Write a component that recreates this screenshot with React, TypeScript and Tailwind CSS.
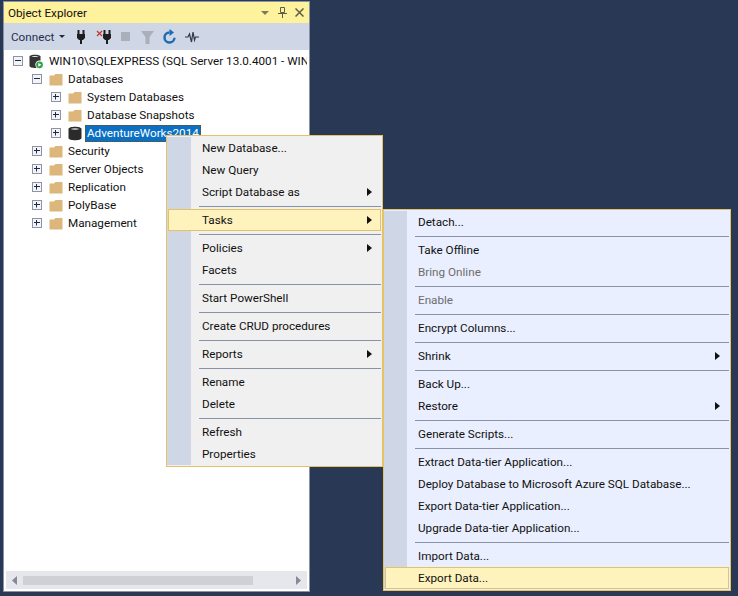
import type { ReactNode } from "react";

const font = "font-['Roboto','Noto_Sans',sans-serif]";

function Box({ open }: { open?: boolean }) {
  return (
    <svg width="10" height="10" viewBox="0 0 10 10" className="shrink-0">
      <rect x="0.500" y="0.500" width="9" height="9" fill="#f3f4f7" stroke="#8e94a6" />
      <path d="M2 4.500h6" stroke="#1e2a44" fill="none" />
      {!open && <path d="M4.500 2v5.500" stroke="#1e2a44" fill="none" />}
    </svg>
  );
}

function Folder() {
  return (
    <svg width="15" height="13" viewBox="0 0 15 13" className="shrink-0">
      <path d="M0.500 2.500V12.500H13.500V1H6.500L5 2.500Z" fill="#dcb67a" />
    </svg>
  );
}

function Cylinder() {
  return (
    <svg width="14" height="15" viewBox="0 0 14 15" className="shrink-0">
      <path d="M0.500 3C0.500 0 13.500 0 13.500 3V12C13.500 15 0.500 15 0.500 12Z" fill="#2b2b2b" />
      <path d="M2.500 3C4.500 2 9.500 2 11.500 3C9.500 4 4.500 4 2.500 3Z" fill="#d4d4d4" />
    </svg>
  );
}

function ServerIcon() {
  return (
    <svg width="15" height="15" viewBox="0 0 15 15" className="shrink-0">
      <path d="M0.500 2.500C0.500 0 11.500 0 11.500 2.500V12C11.500 14.500 0.500 14.500 0.500 12Z" fill="#333" />
      <path d="M2.500 2.500C4 1.700 8 1.700 9.500 2.500C8 3.300 4 3.300 2.500 2.500Z" fill="#ddd" />
      <circle cx="10.500" cy="10.800" r="4.200" fill="#fff" />
      <circle cx="10.500" cy="10.800" r="3.400" fill="#2f9e44" />
      <path d="M9.300 8.900v3.800l3.200-1.900Z" fill="#fff" />
    </svg>
  );
}

function Row({ indent, icon, open, children }: { indent: string; icon: ReactNode; open?: boolean; children: ReactNode }) {
  return (
    <div className={`flex h-[18px] items-center ${indent}`}>
      <Box open={open} />
      <span className="ml-[6px] flex w-[16px] justify-center">{icon}</span>
      <span className="ml-[4px] whitespace-nowrap pt-[2px]">{children}</span>
    </div>
  );
}

function Plug() {
  return (
    <svg width="8" height="14" viewBox="0 0 8 14" className="shrink-0">
      <path d="M1.500 0v4M6.500 0v4" stroke="#1e1e1e" strokeWidth="2" />
      <path d="M0 4h8v4L6 10H5v4H3v-4H2L0 8Z" fill="#1e1e1e" />
    </svg>
  );
}

function Toolbar() {
  return (
    <div className="flex h-[27px] items-center bg-[#cfd6e5] pl-[7px] text-[#1e3050]">
      <span className="mt-[2px] w-[48px]">Connect</span>
      <svg width="6" height="3" viewBox="0 0 6 3" className="shrink-0">
        <path d="M0 0h6L3 3Z" fill="#1e2a44" />
      </svg>
      <span className="ml-[12px] flex items-center">
        <Plug />
      </span>
      <svg width="7" height="7" viewBox="0 0 7 7" className="mb-[7px] ml-[11px] shrink-0">
        <path d="M1 1l5 5M6 1l-5 5" stroke="#c4382c" strokeWidth="1.200" />
      </svg>
      <Plug />
      <svg width="9" height="9" viewBox="0 0 9 9" className="ml-[10px] shrink-0">
        <rect width="9" height="9" fill="#a9afbb" />
      </svg>
      <svg width="13" height="14" viewBox="0 0 13 14" className="ml-[11px] shrink-0">
        <path d="M0 1h13L8.500 7v7h-4V7Z" fill="#a9afbb" />
      </svg>
      <svg width="13" height="15" viewBox="0 0 13 15" className="ml-[9px] shrink-0">
        <path d="M6.500 3.500A5 5 0 1 0 11.500 8.800" fill="none" stroke="#1c6bb0" strokeWidth="2.400" />
        <path d="M6.500 0l4.500 3.500L6.500 7Z" fill="#1c6bb0" />
      </svg>
      <svg width="14" height="12" viewBox="0 0 14 12" className="ml-[9px] shrink-0">
        <path d="M0 6h3l1.500-3 2 8L8 1l1.500 8L10.500 6H14" fill="none" stroke="#33384a" strokeWidth="1.200" />
      </svg>
    </div>
  );
}

function Tree() {
  return (
    <div className="min-h-0 flex-1 overflow-hidden bg-white pt-[2px] text-[#111]">
      <div className="w-[301px] overflow-hidden whitespace-nowrap">
        <Row indent="pl-[7px]" open icon={<ServerIcon />}>
          <span className="ml-[1px]">WIN10\SQLEXPRESS (SQL Server 13.0.4001 - WIN10\User)</span>
        </Row>
        <Row indent="pl-[26px]" open icon={<Folder />}>Databases</Row>
        <Row indent="pl-[45px]" icon={<Folder />}>System Databases</Row>
        <Row indent="pl-[45px]" icon={<Folder />}>Database Snapshots</Row>
        <div className="flex h-[18px] items-center pl-[45px]">
          <Box />
          <span className="ml-[6px] flex w-[16px] justify-center"><Cylinder /></span>
          <span className="ml-[2px] flex h-[17px] items-center border border-dotted border-[#7a4b00] bg-[#0b6fc4] px-[1px] pt-[2px] text-white">
            AdventureWorks2014
          </span>
        </div>
        <Row indent="pl-[26px]" icon={<Folder />}>Security</Row>
        <Row indent="pl-[26px]" icon={<Folder />}>Server Objects</Row>
        <Row indent="pl-[26px]" icon={<Folder />}>Replication</Row>
        <Row indent="pl-[26px]" icon={<Folder />}>PolyBase</Row>
        <Row indent="pl-[26px]" icon={<Folder />}>Management</Row>
      </div>
    </div>
  );
}

type Entry = { t?: string; sub?: boolean; off?: boolean; hot?: boolean };

function Menu({ items, textPad, sepPad, className, innerClass }: { items: Entry[]; textPad: string; sepPad: string; className: string; innerClass: string }) {
  return (
    <div className={`absolute border border-[#e5c365] py-[1px] ${className}`}>
      <div className={innerClass}>
        {items.map((it, i) =>
          it.t ? (
            <div
              key={i}
              className={`mx-[1px] flex h-[22px] items-center border ${it.hot ? "border-[#e5c365] bg-[#fef2bd]" : "border-transparent"} ${it.off ? "text-[#6d6d6d]" : "text-[#111]"}`}
            >
              <span className={`flex-1 whitespace-nowrap pt-[2px] ${textPad}`}>{it.t}</span>
              {it.sub && (
                <svg width="5" height="8" viewBox="0 0 5 8" className="mr-[8px]">
                  <path d="M0 0l5 4-5 4Z" fill="#111" />
                </svg>
              )}
            </div>
          ) : (
            <div key={i} className={`flex h-[6px] items-center pr-[1px] ${sepPad}`}>
              <div className="h-[1px] flex-1 bg-[#8a93a5]" />
            </div>
          ),
        )}
      </div>
    </div>
  );
}

const dbMenu: Entry[] = [
  { t: "New Database..." },
  { t: "New Query" },
  { t: "Script Database as", sub: true },
  {},
  { t: "Tasks", sub: true, hot: true },
  {},
  { t: "Policies", sub: true },
  { t: "Facets" },
  {},
  { t: "Start PowerShell" },
  {},
  { t: "Create CRUD procedures" },
  {},
  { t: "Reports", sub: true },
  {},
  { t: "Rename" },
  { t: "Delete" },
  {},
  { t: "Refresh" },
  { t: "Properties" },
];

const taskMenu: Entry[] = [
  { t: "Detach..." },
  {},
  { t: "Take Offline" },
  { t: "Bring Online", off: true },
  {},
  { t: "Enable", off: true },
  {},
  { t: "Encrypt Columns..." },
  {},
  { t: "Shrink", sub: true },
  {},
  { t: "Back Up..." },
  { t: "Restore", sub: true },
  {},
  { t: "Generate Scripts..." },
  {},
  { t: "Extract Data-tier Application..." },
  { t: "Deploy Database to Microsoft Azure SQL Database..." },
  { t: "Export Data-tier Application..." },
  { t: "Upgrade Data-tier Application..." },
  {},
  { t: "Import Data..." },
  { t: "Export Data...", hot: true },
];

export default function App() {
  return (
    <div className={`relative h-[596px] w-[738px] overflow-hidden bg-[#293955] pb-[4px] pl-[3px] pt-[1px] text-[11.7px] ${font}`}>
      {/* Object Explorer panel */}
      <div className="flex h-full w-[307px] flex-col border border-[#8a93a5]">
        <div className="flex h-[21px] items-center bg-[#fff29d] pl-[4px] pr-[5px] text-[#111]">
          <span className="mt-[3px] flex-1">Object Explorer</span>
          <svg width="8" height="4" viewBox="0 0 8 4">
            <path d="M0 0h8L4 4Z" fill="#7d7a55" />
          </svg>
          <svg width="9" height="11" viewBox="0 0 9 11" className="ml-[9px]">
            <path d="M2.500 0.500h4v5h-4ZM0 6.500h9M4.500 7v4" fill="none" stroke="#5f5d45" />
          </svg>
          <svg width="9" height="9" viewBox="0 0 9 9" className="ml-[8px]">
            <path d="M0.500 0.500l8 8M8.500 0.500l-8 8" stroke="#5f5d45" strokeWidth="1.500" />
          </svg>
        </div>
        <Toolbar />
        <div className="flex min-h-0 flex-1 flex-col border-x-2 border-b-2 border-white">
          <Tree />
          <div className="flex h-[18px] items-center bg-[#e6e7ec] px-[6px]">
            <svg width="5" height="9" viewBox="0 0 5 9"><path d="M5 0v9L0 4.500Z" fill="#868999" /></svg>
            <div className="ml-[6px] h-[9px] w-[230px] bg-[#ced0d6]" />
            <div className="flex-1" />
            <svg width="5" height="9" viewBox="0 0 5 9"><path d="M0 0v9l5-4.500Z" fill="#868999" /></svg>
          </div>
        </div>
      </div>

      {/* Context menus */}
      <Menu
        items={dbMenu}
        textPad="pl-[33px]"
        sepPad="pl-[32px]"
        className="left-[166px] top-[135px] w-[217px] bg-[#f0f0f0]"
        innerClass="bg-[linear-gradient(to_right,#cfd6e5_24px,#f0f0f0_24px)]"
      />
      <Menu
        items={taskMenu}
        textPad="pl-[32px]"
        sepPad="pl-[31px]"
        className="left-[383px] top-[209px] w-[348px] bg-[#e9effe]"
        innerClass="bg-[linear-gradient(to_right,#cfd6e5_23px,#e9effe_23px)]"
      />
    </div>
  );
}
